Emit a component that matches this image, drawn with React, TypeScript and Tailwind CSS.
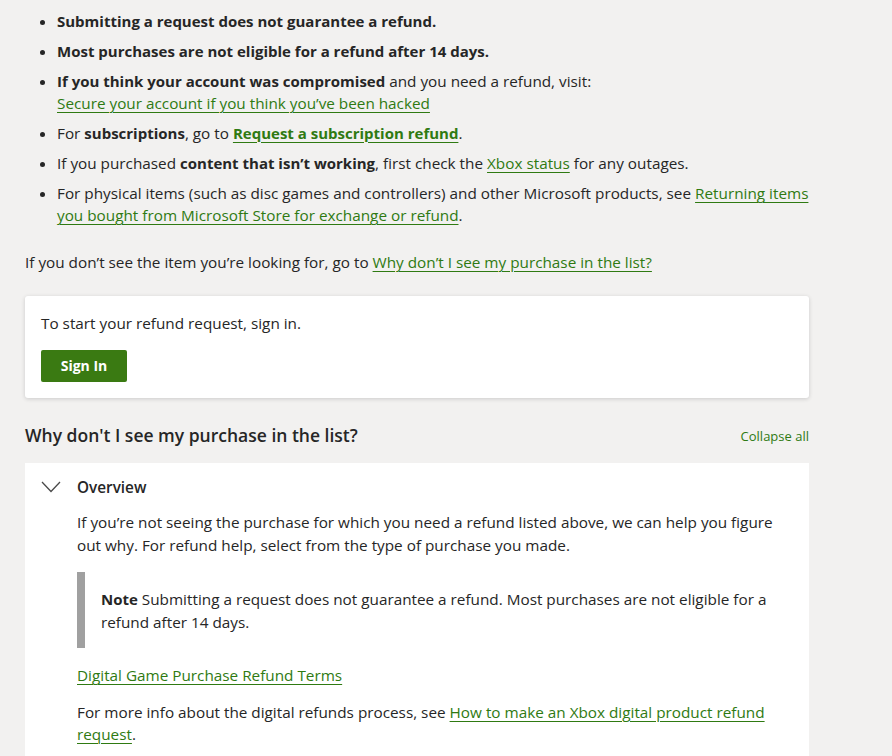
import React from "react";

const font = { fontFamily: '"Segoe UI", "Open Sans", "Noto Sans", sans-serif' };

function A({ children, bold }: { children: React.ReactNode; bold?: boolean }) {
  return (
    <a
      href="#"
      className={
        "text-[#2f7a12] underline underline-offset-[3px] decoration-1 " +
        (bold ? "font-bold text-[15px]" : "")
      }
    >
      {children}
    </a>
  );
}

function B({ children }: { children: React.ReactNode }) {
  return <span className="font-bold text-[15px]">{children}</span>;
}

export default function App() {
  return (
    <div className="min-h-[756px] bg-[#f2f1f0] text-[#262626] text-[15.3px] leading-[22px]" style={font}>
      <div className="w-[784px] ml-[25px] pt-[10px]">
        <ul className="list-disc pl-[32px] flex flex-col gap-[8px] marker:text-[#262626]">
          <li><B>Submitting a request does not guarantee a refund.</B></li>
          <li><B>Most purchases are not eligible for a refund after 14 days.</B></li>
          <li>
            <B>If you think your account was compromised</B> and you need a refund, visit:
            <br />
            <A>Secure your account if you think you’ve been hacked</A>
          </li>
          <li>
            For <B>subscriptions</B>, go to <A bold>Request a subscription refund</A>.
          </li>
          <li>
            If you purchased <B>content that isn’t working</B>, first check the{" "}
            <A>Xbox status</A> for any outages.
          </li>
          <li>
            For physical items (such as disc games and controllers) and other Microsoft products, see{" "}
            <A>Returning items</A>
            <br />
            <A>you bought from Microsoft Store for exchange or refund</A>.
          </li>
        </ul>

        <p className="mt-[25px]">
          If you don’t see the item you’re looking for, go to <A>Why don’t I see my purchase in the list?</A>
        </p>

        <div className="mt-[23px] bg-white rounded-[3px] shadow-[0_1px_4px_rgba(0,0,0,0.16)] px-[16px] pt-[16px] pb-[16px]">
          <p>To start your refund request, sign in.</p>
          <button className="mt-[16px] w-[86px] h-[32px] rounded-[2px] bg-[#3a7a12] text-white text-[14px] font-bold">
            Sign In
          </button>
        </div>

        <div className="mt-[24px] flex items-end justify-between">
          <h2 className="text-[17.5px] leading-[26px] font-semibold">Why don't I see my purchase in the list?</h2>
          <a href="#" className="text-[13px] leading-[20px] text-[#2f7a12] mb-[2px]">Collapse all</a>
        </div>

        <div className="mt-[15px] bg-white pb-[20px]">
          <div className="flex items-center pt-[13px] pl-[16px]">
            <svg width="20" height="12" viewBox="0 0 20 12" className="shrink-0">
              <polyline points="1,1 10,10.5 19,1" fill="none" stroke="#4a4a4a" strokeWidth="1.3" />
            </svg>
            <span className="ml-[16px] font-semibold leading-[22px]">Overview</span>
          </div>
          <div className="pl-[52px] pr-[24px] leading-[22.5px]">
            <p className="mt-[13px]">
              If you’re not seeing the purchase for which you need a refund listed above, we can help you figure
              <br />
              out why. For refund help, select from the type of purchase you made.
            </p>
            <div className="mt-[16px] border-l-[8px] border-[#a0a0a0] pl-[16px] pt-[16px] pb-[15px]">
              <p>
                <B>Note</B> Submitting a request does not guarantee a refund. Most purchases are not eligible for a
                <br />
                refund after 14 days.
              </p>
            </div>
            <p className="mt-[16px]">
              <A>Digital Game Purchase Refund Terms</A>
            </p>
            <p className="mt-[14px]">
              For more info about the digital refunds process, see <A>How to make an Xbox digital product refund</A>
              <br />
              <A>request</A>.
            </p>
          </div>
        </div>
      </div>
    </div>
  );
}
